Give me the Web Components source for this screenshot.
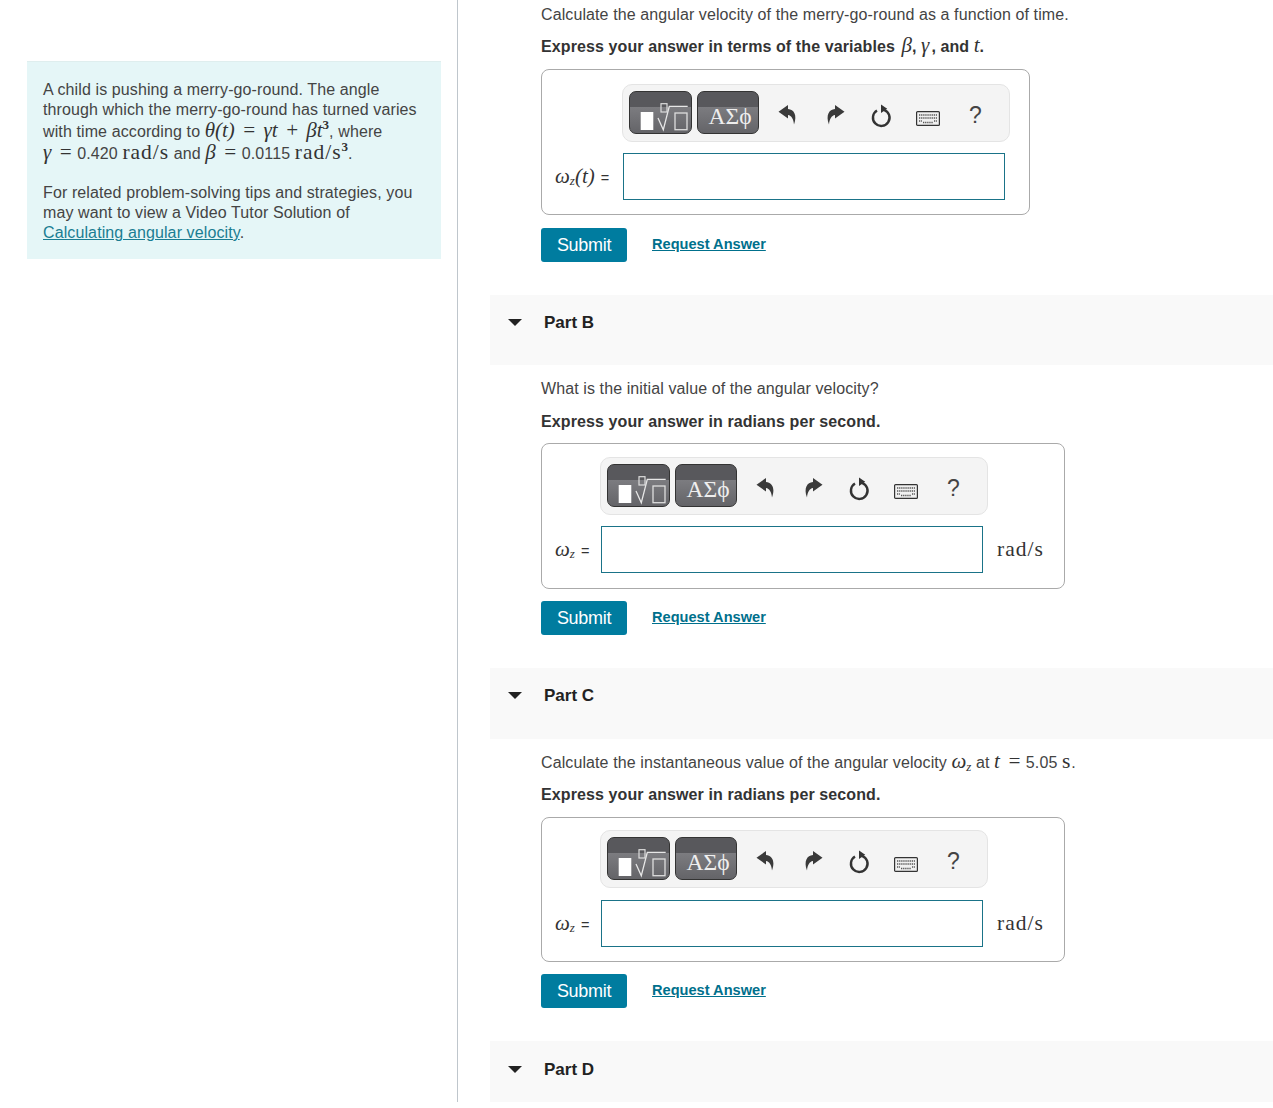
<!DOCTYPE html>
<html><head><meta charset="utf-8"><style>
html,body{margin:0;padding:0;background:#fff}
body{font-family:"Liberation Sans",Arial,sans-serif;font-size:16px;color:#333;height:1108px;overflow:hidden}
mp-sidebar a{color:#1a7d92;text-decoration:underline}
</style></head><body>
<mp-page>
  <mp-sidebar slot="side">
    <p>A child is pushing a merry-go-round. The angle through which the merry-go-round has turned varies with time according to <mp-m big tall>θ(t) = γt + βt<sup>3</sup></mp-m>, where<br><mp-m big tall>γ =</mp-m> 0.420 <mp-m big upright tall>rad/s</mp-m> and <mp-m big tall>β =</mp-m> 0.0115 <mp-m big upright tall>rad/s<sup>3</sup></mp-m>.</p>
    <p>For related problem-solving tips and strategies, you may want to view a Video Tutor Solution of <a>Calculating angular velocity</a>.</p>
  </mp-sidebar>
  <mp-part nohead pad="5" gap="12" spacer="12" acts="13">
    <span slot="q">Calculate the angular velocity of the merry-go-round as a function of time.</span>
    <span slot="hint">Express your answer in terms of the variables <mp-m big thin style="margin-left:2px">β</mp-m>, <mp-m big thin style="margin-right:2px">γ</mp-m>, and <mp-m big thin>t</mp-m>.</span>
    <mp-answer pad="14" rowgap="11" h="146" width="489" lw="57" label="ω<sub>z</sub>(t)"></mp-answer>
  </mp-part>
  <mp-part name="Part B" pad="14" gap="13" spacer="11" acts="12">
    <span slot="q">What is the initial value of the angular velocity?</span>
    <span slot="hint">Express your answer in radians per second.</span>
    <mp-answer pad="13" rowgap="11" h="146" width="524" lw="35" label="ω<sub>z</sub>" unit="rad/s"></mp-answer>
  </mp-part>
  <mp-part name="Part C" headh="71" pad="14" gap="12" spacer="12" acts="12">
    <span slot="q">Calculate the instantaneous value of the angular velocity <mp-m big>ω<sub>z</sub></mp-m> at <mp-m big>t =</mp-m> 5.05 <mp-m big upright>s</mp-m>.</span>
    <span slot="hint">Express your answer in radians per second.</span>
    <mp-answer pad="12" rowgap="12" h="145" width="524" lw="35" label="ω<sub>z</sub>" unit="rad/s"></mp-answer>
  </mp-part>
  <mp-part name="Part D" headtop="19" last></mp-part>
</mp-page>
<script>
function def(name, css, html){
  customElements.define(name, class extends HTMLElement{
    connectedCallback(){
      if(this.shadowRoot) return;
      const r=this.attachShadow({mode:"open"});
      r.innerHTML="<style>"+css+"</style>"+(typeof html==="function"?html(this):html);
    }
  });
}
def("mp-page",`
:host{display:flex;height:1102px;overflow:hidden;align-items:stretch}
.side{box-sizing:border-box;width:458px;flex:none;border-right:1px solid #bfc6cc;padding:61px 16px 0 27px}
.main{flex:1;min-width:0;display:flex;flex-direction:column}
`,`<div class="side"><slot name="side"></slot></div><div class="main"><slot></slot></div>`);
def("mp-sidebar",`
:host{display:block;box-sizing:border-box;height:198px;background:#e5f6f7;border-top:1px solid #dfeeee;padding:18px 16px 0 16px;font-size:16px;line-height:20px;letter-spacing:.11px;color:#444}
::slotted(p){margin:0 0 19px}
`,`<slot></slot>`);
def("mp-m",`
:host{font-family:"Liberation Serif",serif;font-style:italic;font-weight:400;font-size:21px;color:#333;letter-spacing:0;word-spacing:2px;line-height:0}
:host([tall]){line-height:21px}
:host([upright]){font-style:normal;font-size:21.5px;letter-spacing:1px}
::slotted(sup){font-size:13px;font-weight:700;font-style:normal;line-height:0;vertical-align:8px;letter-spacing:0}
::slotted(sub){font-size:13px;line-height:0;vertical-align:-3px}
`,`<slot></slot>`);
def("mp-part",`
:host{display:block;flex:none}
.head{box-sizing:border-box;margin-left:32px;height:70px;background:#f9f9f9;display:flex;align-items:flex-start;padding:18px 0 0 18px;gap:22px;font-weight:700;font-size:17px;line-height:20px;color:#222}
.tri{width:0;height:0;border:7px solid transparent;border-top:7px solid #222;border-bottom:0;margin-top:6px}
.body{padding:0 0 33px 83px;letter-spacing:.1px}
.q{height:20px;line-height:20px;color:#444;white-space:nowrap}
.hint{height:20px;font-weight:700;line-height:20px;color:#333;white-space:nowrap}
.acts{display:flex;align-items:center;gap:25px;letter-spacing:0}
.sub{box-sizing:border-box;width:86px;height:34px;background:#007c9f;border-radius:3px;color:#fff;font-size:18px;letter-spacing:-.3px;display:flex;align-items:center;justify-content:center}
.req{font-weight:700;font-size:14.6px;color:#00708c;text-decoration:underline;margin-bottom:3px}
`,h=>{
  const a=k=>h.getAttribute(k);
  const head=h.hasAttribute("nohead")?"":`<div class="head" style="height:${a("headh")||70}px;padding-top:${a("headtop")||18}px"><span class="tri"></span><span>${a("name")}</span></div>`;
  if(h.hasAttribute("last")) return head;
  return head+`<div class="body" style="padding-top:${a("pad")}px">
  <div class="q"><slot name="q"></slot></div>
  <div class="hint" style="margin-top:${a("gap")}px"><slot name="hint"></slot></div>
  <div style="height:${a("spacer")}px"></div>
  <slot></slot>
  <div class="acts" style="margin-top:${a("acts")}px"><span class="sub">Submit</span><span class="req">Request Answer</span></div>
  </div>`;
});
const icons=[
 [55,`<svg width="24" height="24" viewBox="0 0 24 24"><path d="M3.5 8.7 13 2V6C19 6.500 22.500 12 19 21.500 18.500 16 16.500 12.500 13 12V15.500Z" fill="#3a3a3a"/></svg>`],
 [43,`<svg width="24" height="24" viewBox="0 0 24 24"><path d="M20.5 8.7 11 2V6C5 6.500 1.500 12 5 21.500 5.500 16 7.500 12.500 11 12V15.500Z" fill="#3a3a3a"/></svg>`],
 [47,`<svg width="24" height="24" viewBox="0 0 24 24" style="margin-top:1px"><path d="M8 6.500A8.300 8.300 0 1 0 15 5.800" fill="none" stroke="#333" stroke-width="2.400"/><path d="M12 .5V9L18.200 4.800Z" fill="#333"/></svg>`],
 [47,`<svg width="24" height="15" viewBox="0 0 24 15" style="margin-top:8px"><rect x=".6" y=".6" width="22.800" height="13.800" rx="1" fill="#f0f0f0" stroke="#333" stroke-width="1.200"/><path d="M3 4h18M3 7h18M3 10h3M18 10h3M7 11.500h10" stroke="#555" stroke-width="1.500" stroke-dasharray="1.300 .8"/></svg>`],
 [47,`<span class="h" style="margin:0 0 0 2px">?</span>`]
];
def("mp-answer",`
:host{display:block;box-sizing:border-box;border:1px solid #aaa;border-radius:8px;background:#fff;font-family:"Liberation Sans",sans-serif;letter-spacing:0}
.grid{display:grid;column-gap:11px;padding-left:13px;align-items:center}
.tb{grid-column:2 / 4;box-sizing:border-box;height:58px;width:388px;margin-left:-1px;background:#f4f4f4;border:1px solid #e4e4e4;border-radius:10px;display:flex;align-items:flex-start;padding:6px 0 0 6px}
.b{box-sizing:border-box;height:43px;border:1px solid #333;border-radius:7px;overflow:hidden;background:linear-gradient(#58585c 0 15px,#7c7c80 15px,#646468);display:flex;align-items:flex-end;justify-content:center;color:#eee;flex:none}
.b1{width:63px;margin-right:5px}
.b2{width:62px;font:23.500px/34px "Liberation Serif",serif;padding-left:4px}
.icons{display:flex;align-items:flex-start;padding-top:12px}
.ic{display:flex;justify-content:center;height:26px}
.h{font-size:23px;color:#444;line-height:24px}
.lab{font:italic 21px "Liberation Serif",serif;color:#333;white-space:nowrap;display:flex;align-items:baseline}
.lab sub{font-size:13px;line-height:0;vertical-align:-3px;position:relative;top:2px}
.lab i{font:normal 14.500px "Liberation Sans",sans-serif;margin-left:6px}
.in{box-sizing:border-box;height:47px;width:382px;border:1px solid #1a7388;background:#fff}
.u{font:21.500px "Liberation Serif",serif;letter-spacing:1px;color:#333;padding-left:3px}
`,h=>{
  const a=k=>h.getAttribute(k);
  h.style.width=a("width")+"px";
  h.style.height=a("h")+"px";
  h.style.paddingTop=a("pad")+"px";
  const ics=icons.map(([w,s])=>`<span class="ic" style="width:${w}px">${s}</span>`).join("");
  return `<div class="grid" style="grid-template-columns:${a("lw")}px 382px auto;row-gap:${a("rowgap")}px">
  <span></span>
  <div class="tb">
    <div class="b b1"><svg width="61" height="41" viewBox="0 0 61 41"><rect x="10.700" y="20" width="12.600" height="18" fill="#fff"/><rect x="31" y="11.700" width="6" height="8.300" fill="none" stroke="#ddd" stroke-width="1.200"/><path d="M28 26 33.300 37.700 39.300 14.300H57.700" fill="none" stroke="#e6e6e6" stroke-width="1.300"/><rect x="45" y="21" width="12" height="16.700" fill="none" stroke="#ddd" stroke-width="1.300"/></svg></div>
    <div class="b b2">ΑΣϕ</div>
    <div class="icons">${ics}</div>
  </div>
  <span class="lab">${a("label")}<i>=</i></span>
  <div class="in"></div>
  <span class="u">${a("unit")||""}</span>
  </div>`;
});
</script>
</body></html>
